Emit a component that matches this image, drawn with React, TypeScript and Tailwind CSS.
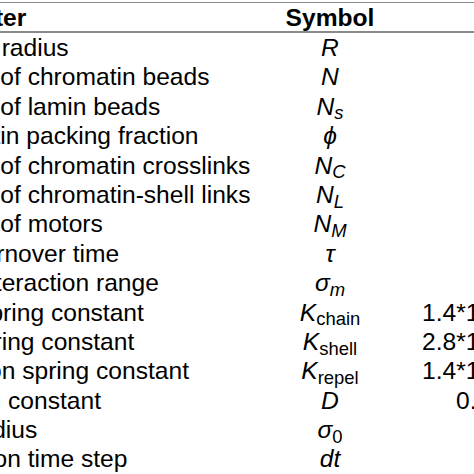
import React from 'react';

type Row = { param: string; symbol: React.ReactNode; value?: string; valuePad?: string };

const rows: Row[] = [
  { param: 'Nucleus radius', symbol: <i>R</i> },
  { param: 'Number of chromatin beads', symbol: <i>N</i> },
  { param: 'Number of lamin beads', symbol: <i>N<sub>s</sub></i> },
  { param: 'Chromatin packing fraction', symbol: <i>ϕ</i> },
  { param: 'Number of chromatin crosslinks', symbol: <i>N<sub>C</sub></i> },
  { param: 'Number of chromatin-shell links', symbol: <i>N<sub>L</sub></i> },
  { param: 'Number of motors', symbol: <i>N<sub>M</sub></i> },
  { param: 'Motor turnover time', symbol: <i>τ</i> },
  { param: 'Motor interaction range', symbol: <i>σ<sub>m</sub></i> },
  {
    param: 'Chain spring constant',
    symbol: (
      <>
        <i>K</i>
        <sub>chain</sub>
      </>
    ),
    value: '1.4*10',
    valuePad: 'pl-[12px]',
  },
  {
    param: 'Shell spring constant',
    symbol: (
      <>
        <i>K</i>
        <sub>shell</sub>
      </>
    ),
    value: '2.8*10',
    valuePad: 'pl-[12px]',
  },
  {
    param: 'Repulsion spring constant',
    symbol: (
      <>
        <i>K</i>
        <sub>repel</sub>
      </>
    ),
    value: '1.4*10',
    valuePad: 'pl-[12px]',
  },
  { param: 'Diffusion constant', symbol: <i>D</i>, value: '0.1', valuePad: 'pl-[46px]' },
  {
    param: 'Bead radius',
    symbol: (
      <>
        <i>σ</i>
        <sub>0</sub>
      </>
    ),
  },
  { param: 'Simulation time step', symbol: <i>dt</i> },
];

export default function App() {
  return (
    <div
      className="w-[474px] h-[474px] overflow-hidden bg-white text-black"
      style={{ fontFamily: '"Liberation Sans", Arial, sans-serif' }}
    >
      <div className="ml-[-94px] w-[760px] pt-[2px] text-[24.6px] leading-[29.4px]">
        {/* top rule */}
        <div className="h-px w-full bg-[#8a8a8a]" />

        {/* header */}
        <div className="flex h-[28px] font-bold">
          <div className="w-[344px]">Parameter</div>
          <div className="w-[160px] text-center">Symbol</div>
          <div className="flex-1 pl-[90px]">Value</div>
        </div>
        <div className="h-[2px] w-full bg-[#8a8a8a]" />

        {rows.map((r) => (
          <div key={r.param} className="flex h-[29.4px]">
            <div className="w-[344px] whitespace-nowrap">{r.param}</div>
            <div className="w-[160px] text-center whitespace-nowrap">{r.symbol}</div>
            <div className={`flex-1 whitespace-nowrap ${r.valuePad ?? ''}`}>
              {r.value}
              {r.value && r.value.includes('*') ? <sup>2</sup> : null}
            </div>
          </div>
        ))}
      </div>
    </div>
  );
}
